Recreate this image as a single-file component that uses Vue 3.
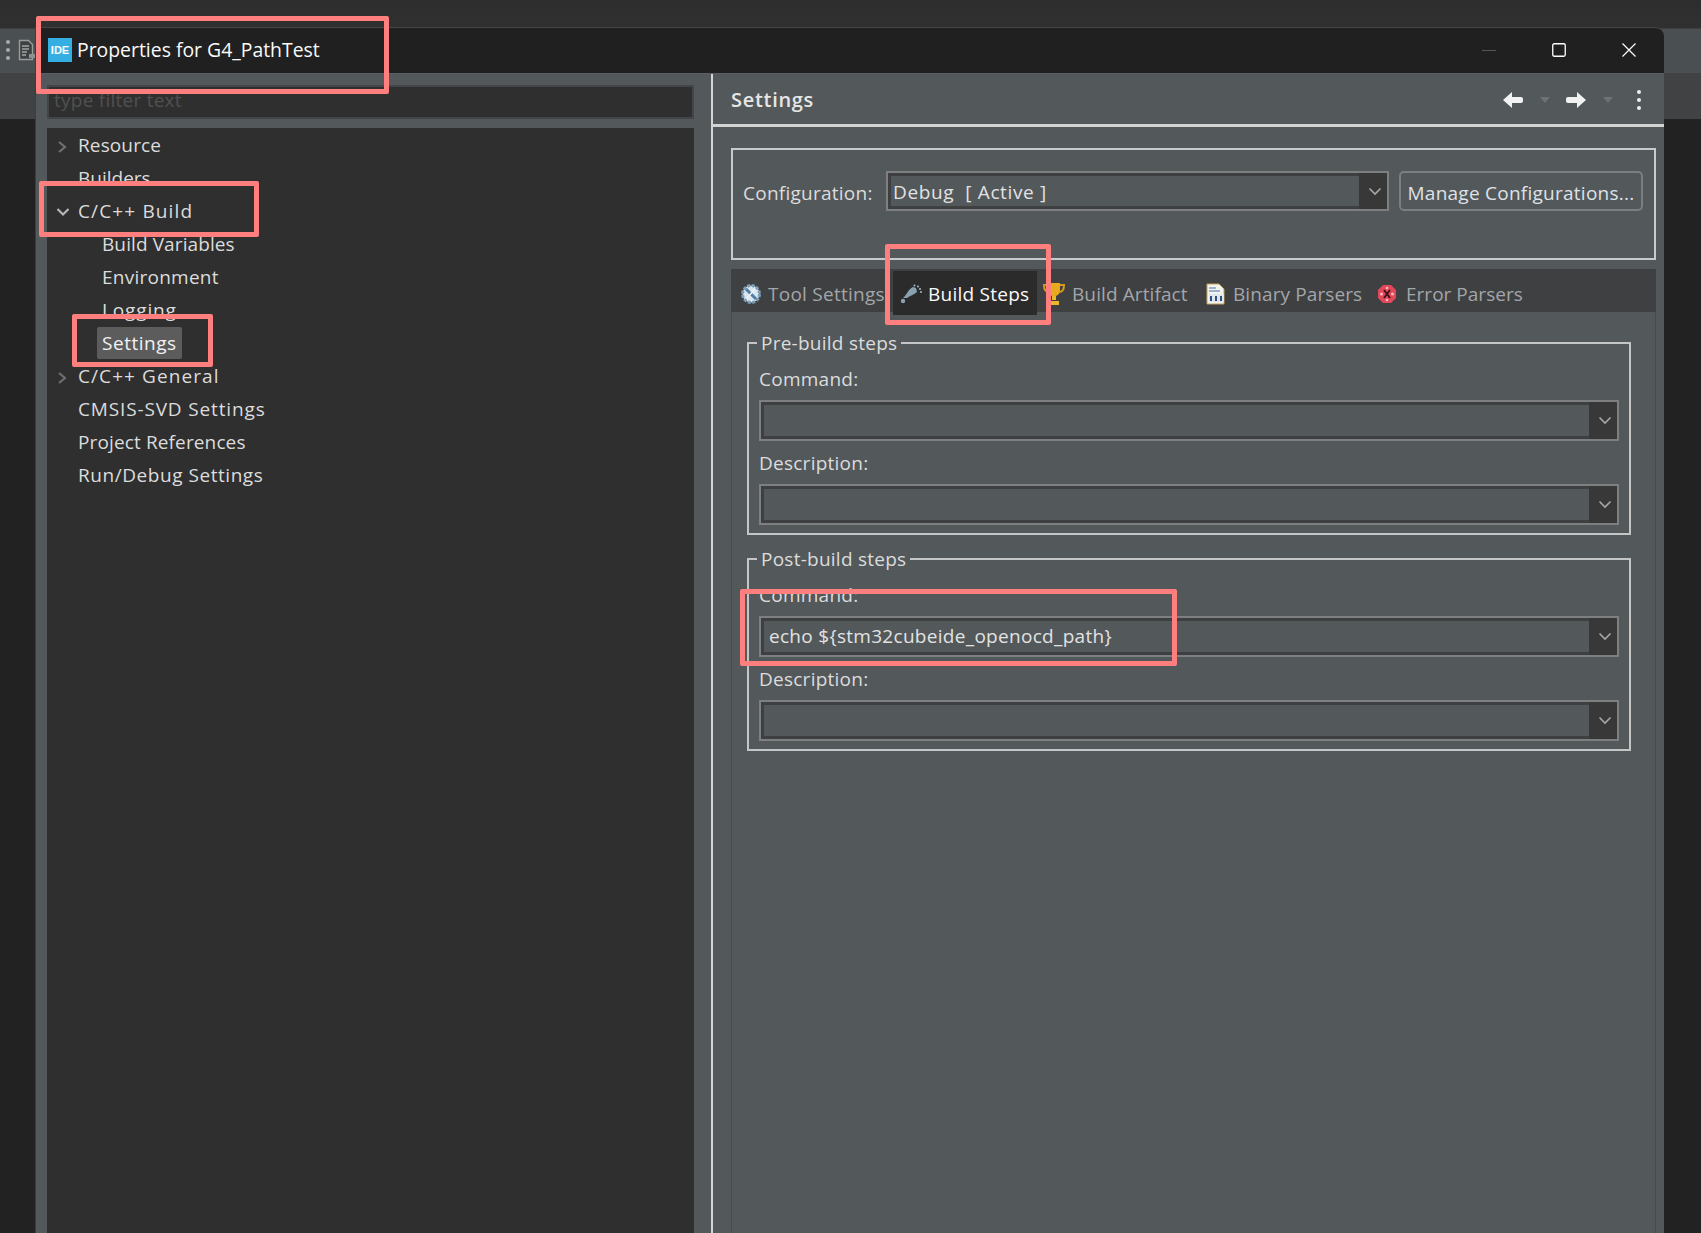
<script setup>
const treeRows = [
  { label: 'Resource', level: 0, arrow: 'closed', track: 0.12 },
  { label: 'Builders', level: 0, track: 0 },
  { label: 'C/C++ Build', level: 0, arrow: 'open', track: 1.14 },
  { label: 'Build Variables', level: 1, track: 0.1 },
  { label: 'Environment', level: 1, track: 0.25 },
  { label: 'Logging', level: 1, track: 0.85 },
  { label: 'Settings', level: 1, selected: true, track: 0.52 },
  { label: 'C/C++ General', level: 0, arrow: 'closed', track: 1.08 },
  { label: 'CMSIS-SVD Settings', level: 0, track: 0.85 },
  { label: 'Project References', level: 0, track: 0.13 },
  { label: 'Run/Debug Settings', level: 0, track: 0.55 }
]
const groups = [
  { title: 'Pre-build steps', command: '' },
  { title: 'Post-build steps', command: 'echo ${stm32cubeide_openocd_path}' }
]
</script>

<template>
  <div class="desktop">
    <div class="side-tools">
      <span class="grip"><i></i><i></i><i></i></span>
      <svg class="doc-icon" width="18" height="22" viewBox="0 0 18 22">
        <path d="M1.500 1.500h9l4 4v15h-13z" fill="#3d4143" stroke="#9a9c9c" stroke-width="1.400" />
        <path d="M4 7h7M4 10h7M4 13h5M4 16h4" stroke="#a5a7a7" stroke-width="1.300" />
        <path d="M11 15h6v4h-6z" fill="#8d9093" />
      </svg>
    </div>

    <div class="window">
      <header class="titlebar">
        <div class="logo">IDE</div>
        <div class="title">Properties for G4_PathTest</div>
        <div class="win-controls">
          <span class="win-btn"><svg width="14" height="14" viewBox="0 0 14 14"><path d="M0 7.500h14" stroke="#565656" /></svg></span>
          <span class="win-btn"><svg width="14" height="14" viewBox="0 0 14 14"><rect x=".75" y=".75" width="12.500" height="12.500" rx="1.500" fill="none" stroke="#fff" stroke-width="1.300" /></svg></span>
          <span class="win-btn"><svg width="14" height="14" viewBox="0 0 14 14"><path d="M.5.5l13 13M13.500.5l-13 13" stroke="#fff" stroke-width="1.200" /></svg></span>
        </div>
      </header>

      <div class="panes">
        <aside class="left-pane">
          <div class="filter">type filter text</div>
          <ul class="tree">
            <li v-for="row in treeRows" :key="row.label" class="tree-row" :class="{ nested: row.level === 1 }">
              <svg v-if="row.arrow === 'closed'" class="twisty" width="12" height="14" viewBox="0 0 12 14"><path d="M3 2l6 5-6 5" fill="none" stroke="#6f6f6f" stroke-width="2.200" /></svg>
              <svg v-if="row.arrow === 'open'" class="twisty" width="14" height="12" viewBox="0 0 14 12"><path d="M1.500 3l5.500 5.500L12.500 3" fill="none" stroke="#b5b5b5" stroke-width="2.200" /></svg>
              <span class="tree-label" :class="{ selected: row.selected }" :style="{ letterSpacing: row.track + 'px' }">{{ row.label }}</span>
            </li>
          </ul>
        </aside>

        <main class="right-pane">
          <div class="page-head">
            <span class="page-title">Settings</span>
            <div class="page-tools">
              <span class="tool"><svg width="22" height="20" viewBox="0 0 22 20"><path d="M1 10L10 2v5h9a2 2 0 0 1 2 2v2a2 2 0 0 1-2 2h-9v5z" fill="#f2f2f2" /></svg></span>
              <span class="tool"><svg width="10" height="6" viewBox="0 0 10 6"><path d="M0 0h10L5 6z" fill="#6e7274" /></svg></span>
              <span class="tool"><svg width="22" height="20" viewBox="0 0 22 20"><path d="M21 10L12 2v5H3a2 2 0 0 0-2 2v2a2 2 0 0 0 2 2h9v5z" fill="#f2f2f2" /></svg></span>
              <span class="tool"><svg width="10" height="6" viewBox="0 0 10 6"><path d="M0 0h10L5 6z" fill="#6e7274" /></svg></span>
              <span class="tool dots"><i></i><i></i><i></i></span>
            </div>
          </div>

          <div class="page-body">
            <section class="config">
              <span class="config-label">Configuration:</span>
              <div class="combo config-combo">
                <span class="combo-text">Debug&nbsp; [ Active ]</span>
                <span class="combo-arrow"><svg width="14" height="9" viewBox="0 0 14 9"><path d="M1.500 1.500L7 7l5.500-5.500" fill="none" stroke="#a8a8a8" stroke-width="1.600" /></svg></span>
              </div>
              <button class="manage">Manage Configurations...</button>
            </section>

            <nav class="tabs">
              <div class="tab tool-tab">
                <svg width="22" height="22" viewBox="0 0 22 22">
                  <circle cx="11" cy="11" r="8.500" fill="#dbe6ee" stroke="#7c9db8" stroke-width="3" stroke-dasharray="3 1.500" />
                  <path d="M6 6l10 10" stroke="#4f7ea6" stroke-width="3" />
                  <path d="M15 6l-8 9" stroke="#f2f5f7" stroke-width="1.500" />
                </svg>
                <span>Tool Settings</span>
              </div>
              <div class="tab active">
                <svg width="24" height="22" viewBox="0 0 24 22">
                  <path d="M4 15C8 12 9 6 14 4l3 1 1 4c-3 3-6 3-10 6z" fill="#8aa1b2" />
                  <circle cx="4" cy="18" r="2.200" fill="#8aa1b2" />
                  <circle cx="15.500" cy="2.500" r="1" fill="#a8bac7" />
                  <circle cx="19" cy="3.500" r="1" fill="#a8bac7" />
                  <circle cx="21" cy="6" r="1" fill="#a8bac7" />
                  <circle cx="22" cy="9" r="1" fill="#a8bac7" />
                </svg>
                <span>Build Steps</span>
              </div>
              <div class="tab artifact-tab">
                <svg width="24" height="24" viewBox="0 0 24 24">
                  <path d="M6 1h12v7c0 4-2.500 6-6 6s-6-2-6-6z" fill="#e9a91e" />
                  <path d="M6 3H2c0 4 1 7 5 7M18 3h4c0 4-1 7-5 7" fill="none" stroke="#d79a18" stroke-width="2" />
                  <path d="M10 14h4v4h-4zM7 19h10v4H7z" fill="#efb52a" />
                </svg>
                <span>Build Artifact</span>
              </div>
              <div class="tab binary-tab">
                <svg width="20" height="22" viewBox="0 0 20 22">
                  <path d="M1 1h12l5 5v15H1z" fill="#f2f2ee" stroke="#c2a45d" />
                  <path d="M3 5h7M3 8h11" stroke="#7f9fc6" stroke-width="1.500" />
                  <path d="M3 11h15v8H3z" fill="#dfe6ee" />
                  <path d="M5 13v5M10 13v5M15 13v5" stroke="#2f4f80" stroke-width="2" />
                </svg>
                <span>Binary Parsers</span>
              </div>
              <div class="tab error-tab">
                <svg width="20" height="20" viewBox="0 0 20 20">
                  <path d="M6 1h8l5 5v8l-5 5H6l-5-5V6z" fill="#e2475a" />
                  <circle cx="4.500" cy="10" r="1.500" fill="#f7b9c0" />
                  <circle cx="15.500" cy="10" r="1.500" fill="#f7b9c0" />
                  <circle cx="10" cy="4" r="1.300" fill="#f7b9c0" />
                  <circle cx="10" cy="16" r="1.300" fill="#f7b9c0" />
                  <path d="M7 6l6 8M13 6l-6 8" stroke="#3a1418" stroke-width="1.800" />
                </svg>
                <span>Error Parsers</span>
              </div>
            </nav>

            <div class="tab-page">
              <fieldset v-for="group in groups" :key="group.title" class="group">
                <legend>{{ group.title }}</legend>
                <label class="field-label">Command:</label>
                <div class="combo field-combo">
                  <span class="combo-text">{{ group.command }}</span>
                  <span class="combo-arrow"><svg width="14" height="9" viewBox="0 0 14 9"><path d="M1.500 1.500L7 7l5.500-5.500" fill="none" stroke="#a8a8a8" stroke-width="1.600" /></svg></span>
                </div>
                <label class="field-label second">Description:</label>
                <div class="combo field-combo">
                  <span class="combo-text"></span>
                  <span class="combo-arrow"><svg width="14" height="9" viewBox="0 0 14 9"><path d="M1.500 1.500L7 7l5.500-5.500" fill="none" stroke="#a8a8a8" stroke-width="1.600" /></svg></span>
                </div>
              </fieldset>
            </div>
          </div>
        </main>
      </div>
    </div>

    <div class="mark mark-title"></div>
    <div class="mark mark-build"></div>
    <div class="mark mark-settings"></div>
    <div class="mark mark-tab"></div>
    <div class="mark mark-command"></div>
  </div>
</template>

<style>
html, body { margin: 0; background: #222; }
</style>

<style scoped>
* { box-sizing: border-box; }
.desktop {
  position: relative;
  width: 1701px;
  height: 1233px;
  overflow: hidden;
  display: flex;
  align-items: flex-start;
  padding-top: 27px;
  font-family: "Open Sans", "Noto Sans", sans-serif;
  color: #dcdcdc;
  background: linear-gradient(#2d2d2d 0, #303030 28px, #4a4f51 29px, #4a4f51 73px, #404244 73px, #404244 119px, #222 119px);
}
.side-tools {
  width: 35px;
  height: 46px;
  flex: none;
  display: flex;
  align-items: center;
  padding-left: 6px;
  gap: 8px;
}
.grip { display: flex; flex-direction: column; gap: 4px; }
.grip i { width: 4px; height: 4px; border-radius: 50%; background: #a9abab; display: block; }
.doc-icon { flex: none; }
.window {
  width: 1629px;
  height: 1206px;
  flex: none;
  border-top: 1px solid #454545;
  border-top-right-radius: 9px;
  border-left: 1px solid #3d3d3d;
  background: #53585b;
  overflow: hidden;
  display: flex;
  flex-direction: column;
}
.titlebar {
  height: 46px;
  flex: none;
  background: #202020;
  display: flex;
  align-items: center;
  padding: 0 0 2px 12px;
  border-bottom: 1px solid #5a5e60;
}
.logo {
  width: 24px;
  height: 24px;
  background: #35aee2;
  color: #fff;
  font-family: "Liberation Sans", sans-serif;
  font-size: 11px;
  font-weight: 700;
  line-height: 24px;
  text-align: center;
}
.title { margin-left: 5px; font-size: 19.400px; line-height: 26px; color: #fafafa; }
.win-controls { margin-left: auto; display: flex; }
.win-btn { width: 70px; height: 43px; display: flex; align-items: center; justify-content: center; }
.panes { flex: 1; display: flex; min-height: 0; }
.left-pane {
  width: 677px;
  flex: none;
  padding: 11px 17px 0 11px;
  display: flex;
  flex-direction: column;
  gap: 9px;
  border-right: 2px solid #d5d5d5;
}
.filter {
  height: 34px;
  flex: none;
  background: #2f2f2f;
  border: 2px solid #434648;
  padding-left: 5px;
  color: #505050;
  font-size: 19px;
  letter-spacing: .25px;
  line-height: 27px;
}
.tree {
  flex: 1;
  margin: 0;
  padding: 0;
  list-style: none;
  background: #2f2f2f;
}
.tree-row {
  position: relative;
  height: 33px;
  display: flex;
  align-items: center;
  padding-left: 31px;
  font-size: 19px;
}
.tree-row.nested { padding-left: 50px; }
.tree-label { padding: 0 5px; line-height: 32px; margin-left: -5px; border-radius: 2px; }
.tree-row.nested .tree-label { margin-left: 0; }
.tree-label.selected { background: #5c5c5c; color: #f2f2f2; }
.twisty { position: absolute; left: 9px; top: 12px; }
.right-pane { flex: 1; min-width: 0; display: flex; flex-direction: column; }
.page-head {
  height: 53px;
  flex: none;
  display: flex;
  align-items: center;
  padding: 1px 9px 0 18px;
  border-bottom: 3px solid #d2d3d3;
}
.page-title { font-size: 20px; font-weight: 600; color: #e6e6e6; letter-spacing: .7px; }
.page-tools { margin-left: auto; display: flex; align-items: center; }
.tool { width: 31.500px; height: 30px; display: flex; align-items: center; justify-content: center; }
.dots { flex-direction: column; gap: 4px; }
.dots i { width: 4px; height: 4px; border-radius: 50%; background: #eee; display: block; }
.page-body { flex: 1; padding: 21px 8px 0 18px; display: flex; flex-direction: column; min-height: 0; font-size: 19px; letter-spacing: .25px; }
.config {
  height: 112px;
  flex: none;
  border: 2px solid #c9caca;
  display: flex;
  align-items: flex-start;
  padding: 21px 11px 0 10px;
}
.config-label { width: 143px; flex: none; line-height: 44px; }
.combo {
  display: flex;
  border: 2px solid #7d7f80;
  background: #53585b;
  box-shadow: inset 0 3px 0 #3d3f40, inset 3px 0 0 #3d3f40, inset 0 -3px 0 #3d3f40;
}
.config-combo { width: 503px; height: 40px; }
.combo-text { flex: 1; padding-left: 5px; line-height: 36px; white-space: pre; color: #e2e2e2; }
.config-combo .combo-text { line-height: 38px; letter-spacing: .63px; }
.field-combo .combo-text { padding-left: 8px; line-height: 36px; letter-spacing: .3px; }
.combo-arrow { width: 28px; flex: none; background: #383838; display: flex; align-items: center; justify-content: center; padding-left: 3px; }
.manage {
  margin-left: 10px;
  width: 244px;
  height: 40px;
  padding: 3px 0 0;
  border: 2px solid #7c7e80;
  border-radius: 5px;
  background: transparent;
  color: #dfe2e6;
  font: inherit;
  letter-spacing: inherit;
  line-height: 34px;
  text-align: center;
  white-space: nowrap;
}
.tabs {
  position: relative;
  height: 43px;
  margin-top: 9px;
  flex: none;
  display: flex;
  align-items: flex-start;
  background: #3f4042;
  color: #a3a6a9;
}
.tab { top: 2px; height: 44px; padding-top: 1px; display: flex; align-items: center; gap: 6px; white-space: nowrap; position: absolute; }
.tool-tab { left: 9px; }
.active { left: 162px; width: 144px; padding-left: 6px; background: #2b2b2b; color: #fafafa; gap: 5px; }
.artifact-tab { left: 311px; letter-spacing: .1px; }
.binary-tab { left: 475px; gap: 7px; letter-spacing: .1px; }
.error-tab { left: 646px; gap: 9px; letter-spacing: .02px; }
.tab-page {
  flex: 1;
  border-left: 1px solid #484b4d;
  border-right: 1px solid #484b4d;
  padding: 18px 0 0 15px;
}
.group {
  width: 884px;
  margin: 0 0 11px;
  padding: 0 10px 8px;
  border: 2px solid #c4c5c5;
  min-width: 0;
}
.group legend { margin-left: -2px; padding: 0 4px; line-height: 26px; color: #dcdcdc; }
.field-label { display: block; height: 26px; margin: 10px 0 8px; line-height: 26px; }
.field-label.second { margin-top: 9px; }
.field-combo { height: 41px; }
.mark {
  position: absolute;
  border: 5px solid #ff7f7f;
  border-radius: 2px;
  pointer-events: none;
}
.mark-title { left: 36px; top: 16px; width: 353px; height: 78px; }
.mark-build { left: 39px; top: 181px; width: 220px; height: 56px; }
.mark-settings { left: 72px; top: 314px; width: 141px; height: 53px; }
.mark-tab { left: 885px; top: 244px; width: 166px; height: 81px; }
.mark-command { left: 740px; top: 589px; width: 437px; height: 77px; }
</style>
